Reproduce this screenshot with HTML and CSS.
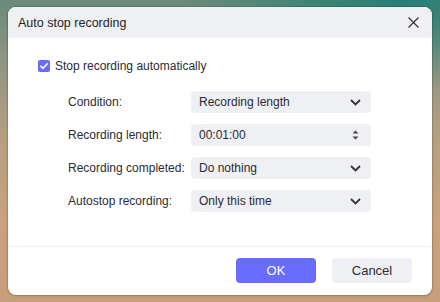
FILE: index.html
```html
<!DOCTYPE html>
<html>
<head>
<meta charset="utf-8">
<link rel="stylesheet" href="styles.css">
</head>
<body>
<div class="dialog">
  <div class="header">
    <span class="title">Auto stop recording</span>
    <svg class="close" width="11" height="11" viewBox="0 0 11 11"><path d="M0.5 0.5 L10.5 10.5 M10.5 0.5 L0.5 10.5" stroke="#333" stroke-width="1.2" fill="none"/></svg>
  </div>
  <div class="content">
    <label class="check-row">
      <span class="checkbox"><svg width="12" height="12" viewBox="0 0 12 12"><path d="M2.8 6.2 L5 8.3 L9.3 3.8" stroke="#fff" stroke-width="1.6" fill="none" stroke-linecap="round" stroke-linejoin="round"/></svg></span>
      <span>Stop recording automatically</span>
    </label>
    <div class="form">
      <div class="row">
        <span class="label">Condition:</span>
        <div class="field"><span>Recording length</span><svg class="chev" width="11" height="7" viewBox="0 0 11 7"><path d="M1 1 L5.5 5.5 L10 1" stroke="#333" stroke-width="1.8" fill="none"/></svg></div>
      </div>
      <div class="row">
        <span class="label">Recording length:</span>
        <div class="field"><span>00:01:00</span><svg class="spin" width="7" height="10" viewBox="0 0 7 10"><path d="M3.5 0.5 L6.5 3.5 L0.5 3.5 Z M3.5 9.5 L6.5 6.5 L0.5 6.5 Z" fill="#444"/></svg></div>
      </div>
      <div class="row">
        <span class="label">Recording completed:</span>
        <div class="field"><span>Do nothing</span><svg class="chev" width="11" height="7" viewBox="0 0 11 7"><path d="M1 1 L5.5 5.5 L10 1" stroke="#333" stroke-width="1.8" fill="none"/></svg></div>
      </div>
      <div class="row">
        <span class="label">Autostop recording:</span>
        <div class="field"><span>Only this time</span><svg class="chev" width="11" height="7" viewBox="0 0 11 7"><path d="M1 1 L5.5 5.5 L10 1" stroke="#333" stroke-width="1.8" fill="none"/></svg></div>
      </div>
    </div>
  </div>
  <div class="footer">
    <button class="btn primary">OK</button>
    <button class="btn">Cancel</button>
  </div>
</div>
</body>
</html>
```
FILE: styles.css
```css
html, body {
  margin: 0;
  padding: 0;
}
body {
  width: 440px;
  height: 302px;
  overflow: hidden;
  font-family: "Liberation Sans", Arial, sans-serif;
  font-size: 12px;
  color: #2b2b33;
  background:
    radial-gradient(ellipse 220px 90px at 400px 0px, rgba(30,125,115,0.9), rgba(30,125,115,0) 100%),
    linear-gradient(180deg, #6a8a7a 0%, #8a9482 18%, #b59f80 45%, #c9a27c 75%, #c79f7b 100%);
  padding-top: 7px;
  box-sizing: border-box;
}
.dialog {
  margin: 0 8px;
  width: 424px;
  height: 288px;
  background: #fff;
  border-radius: 8px;
  box-shadow: 0 0 0 1px rgba(0,0,0,0.12), 0 1px 3px rgba(0,0,0,0.15);
  overflow: hidden;
  display: flex;
  flex-direction: column;
}
.header {
  height: 31px;
  flex: none;
  background: #eff0f4;
  display: flex;
  align-items: center;
  justify-content: space-between;
  padding: 0 13px 0 10px;
}
.title {
  font-size: 12.5px;
  color: #222;
}
.close {
  display: block;
}
.content {
  flex: 1;
  padding: 22px 0 0 30px;
}
.check-row {
  display: flex;
  align-items: center;
  gap: 5px;
  height: 12px;
  font-size: 12px;
}
.checkbox {
  width: 12px;
  height: 12px;
  border-radius: 2px;
  background: #6a6bff;
  display: flex;
  align-items: center;
  justify-content: center;
}
.form {
  margin-top: 19px;
  padding-left: 30px;
  display: flex;
  flex-direction: column;
  gap: 11px;
}
.row {
  display: flex;
  align-items: center;
  height: 22px;
}
.label {
  width: 123px;
  font-size: 12px;
}
.field {
  width: 180px;
  height: 22px;
  box-sizing: border-box;
  background: #eff0f4;
  border-radius: 4px;
  display: flex;
  align-items: center;
  justify-content: space-between;
  padding: 0 10px 0 8px;
  font-size: 12px;
}
.field .spin {
  margin-right: 2px;
}
.footer {
  flex: none;
  height: 49px;
  border-top: 1px solid #eceef2;
  display: flex;
  justify-content: flex-end;
  align-items: flex-start;
  padding: 11px 20px 0 0;
  box-sizing: border-box;
  gap: 16px;
}
.btn {
  width: 80px;
  height: 25px;
  border: none;
  border-radius: 4px;
  background: #eff0f4;
  color: #2b2b33;
  font-family: "Liberation Sans", Arial, sans-serif;
  font-size: 13px;
  padding: 0;
}
.btn.primary {
  background: #6a6bff;
  color: #fff;
}
```
